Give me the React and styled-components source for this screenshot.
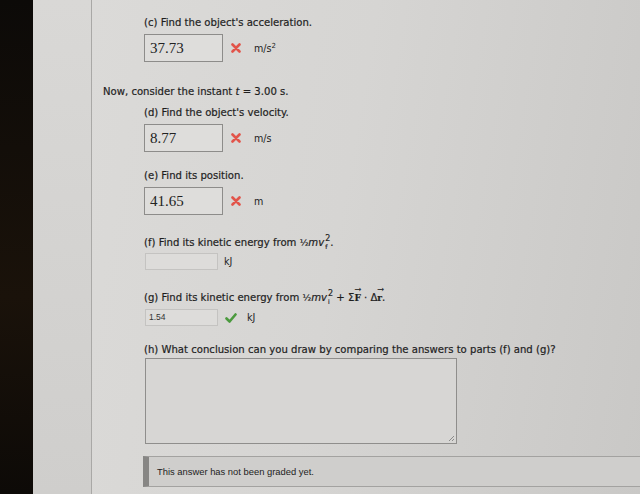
import React from 'react';
import styled, { createGlobalStyle } from 'styled-components';

const Global = createGlobalStyle`
  html, body {
    margin: 0;
    padding: 0;
    background: #000;
  }
  #root {
    width: 640px;
    height: 494px;
    overflow: hidden;
  }
`;

const Screen = styled.div`
  display: flex;
  width: 640px;
  height: 494px;
  background: #0a0806;
`;

const Bezel = styled.div`
  width: 33px;
  flex-shrink: 0;
  background: linear-gradient(180deg, #0c0a08, #1a120a 60%, #0d0a07);
`;

const SidePanel = styled.div`
  width: 58px;
  flex-shrink: 0;
  border-right: 1px solid #a9a8a6;
  background: linear-gradient(180deg, #d9d8d6, #cfcecc);
`;

const Content = styled.div`
  flex: 1;
  padding-left: 11px;
  background: linear-gradient(100deg, #dbdad8 0%, #d6d5d3 45%, #c9c8c6 100%);
  font-family: "DejaVu Sans", Verdana, sans-serif;
  font-size: 10.1px;
  color: #1e1e1e;
  display: flex;
  flex-direction: column;
`;

const Part = styled.div`
  padding-left: 41px;
  margin-top: ${(p) => p.$top}px;
`;

const Label = styled.div`
  height: 14px;
  line-height: 14px;
  white-space: nowrap;
  -webkit-text-stroke: 0.2px #1e1e1e;
`;

const Intro = styled(Label)`
  margin-top: 23px;
`;

const AnswerRow = styled.div`
  display: flex;
  align-items: center;
  margin-top: ${(p) => p.$gap}px;
`;

const BigBox = styled.div`
  width: 72px;
  height: 26px;
  border: 1px solid #8d8c8a;
  background: #dedddb;
  font-family: "Liberation Serif", "Times New Roman", serif;
  font-size: 15px;
  line-height: 26px;
  padding-left: 5px;
  color: #222;
`;

const SmallBox = styled.div`
  width: 68px;
  height: 15px;
  margin-left: 1px;
  border: 1px solid #c4c3c1;
  background: #dddcda;
  font-family: "Liberation Sans", Arial, sans-serif;
  font-size: 8.5px;
  line-height: 15px;
  padding-left: 3px;
  color: #333;
`;

const Mark = styled.span`
  display: inline-flex;
  width: 13px;
  margin-left: ${(p) => p.$left}px;
`;

const Unit = styled.span`
  margin-left: ${(p) => p.$left}px;
  font-size: 9.6px;
  sup {
    font-size: 7px;
    vertical-align: 4px;
  }
`;

const Half = styled.span`
  font-size: 9px;
  letter-spacing: -1px;
  margin-right: 1px;
`;

const Stack = styled.span`
  display: inline-flex;
  flex-direction: column;
  vertical-align: 5px;
  line-height: 8px;
  font-size: 8px;
  margin-left: 1px;
  span:last-child {
    font-size: 6px;
    line-height: 6px;
    margin-top: 1px;
  }
`;

const Vec = styled.span`
  display: inline-block;
  position: relative;
  font-family: "DejaVu Serif", serif;
  font-weight: bold;
  font-size: 9px;
  &::after {
    content: "\u2192";
    position: absolute;
    left: 0;
    top: -8px;
    font-size: 8px;
    font-weight: normal;
  }
`;

const TextArea = styled.div`
  position: relative;
  width: 310px;
  height: 84px;
  margin-top: 1px;
  margin-left: 1px;
  border: 1px solid #8f8e8c;
  background: #d7d6d4;
`;

const Grip = styled.svg`
  position: absolute;
  right: 1px;
  bottom: 1px;
`;

const Notice = styled.div`
  margin-top: 12px;
  margin-left: 40px;
  height: 29px;
  border-top: 1px solid #a3a2a0;
  border-bottom: 1px solid #a3a2a0;
  border-left: 6px solid #878684;
  background: #cfcecc;
  display: flex;
  align-items: center;
  padding-left: 8px;
  font-family: "Liberation Sans", Arial, sans-serif;
  font-size: 9.4px;
  color: #222;
`;

const Cross = () => (
  <svg width="10" height="10" viewBox="0 0 10 10">
    <path d="M1.5 1.5 L8.5 8.5 M8.5 1.5 L1.5 8.5" stroke="#e2544a" strokeWidth="2.6" strokeLinecap="round" />
  </svg>
);

const Check = () => (
  <svg width="12" height="10" viewBox="0 0 12 10">
    <path d="M1.5 5.5 L4.6 8.5 L10.5 1.5" fill="none" stroke="#4b9a3e" strokeWidth="2.6" strokeLinecap="round" strokeLinejoin="round" />
  </svg>
);

function Answer({ value, unit }) {
  return (
    <AnswerRow $gap={4}>
      <BigBox>{value}</BigBox>
      <Mark $left={8}>
        <Cross />
      </Mark>
      <Unit $left={10}>{unit}</Unit>
    </AnswerRow>
  );
}

function Velocity({ sub }) {
  return (
    <>
      <Half>½</Half>
      <i>mv</i>
      <Stack>
        <span>2</span>
        <span>{sub}</span>
      </Stack>
    </>
  );
}

export default function App() {
  return (
    <>
      <Global />
      <Screen>
        <Bezel />
        <SidePanel />
        <Content>
          <Part $top={16}>
            <Label>(c) Find the object's acceleration.</Label>
            <Answer value="37.73" unit={<>m/s<sup>2</sup></>} />
          </Part>

          <Intro>
            Now, consider the instant <i>t</i> = 3.00 s.
          </Intro>

          <Part $top={7}>
            <Label>(d) Find the object's velocity.</Label>
            <Answer value="8.77" unit="m/s" />
          </Part>

          <Part $top={17}>
            <Label>(e) Find its position.</Label>
            <Answer value="41.65" unit="m" />
          </Part>

          <Part $top={20}>
            <Label>
              (f) Find its kinetic energy from <Velocity sub="f" />.
            </Label>
            <AnswerRow $gap={4}>
              <SmallBox />
              <Unit $left={6}>kJ</Unit>
            </AnswerRow>
          </Part>

          <Part $top={20}>
            <Label>
              (g) Find its kinetic energy from <Velocity sub="i" /> + Σ<Vec>F</Vec> · Δ<Vec>r</Vec>.
            </Label>
            <AnswerRow $gap={5}>
              <SmallBox>1.54</SmallBox>
              <Mark $left={7}>
                <Check />
              </Mark>
              <Unit $left={9}>kJ</Unit>
            </AnswerRow>
          </Part>

          <Part $top={17}>
            <Label>(h) What conclusion can you draw by comparing the answers to parts (f) and (g)?</Label>
            <TextArea>
              <Grip width="7" height="7" viewBox="0 0 7 7">
                <path d="M1 6 L6 1 M4 6 L6 4" stroke="#777" strokeWidth="0.8" />
              </Grip>
            </TextArea>
          </Part>

          <Notice>This answer has not been graded yet.</Notice>
        </Content>
      </Screen>
    </>
  );
}
